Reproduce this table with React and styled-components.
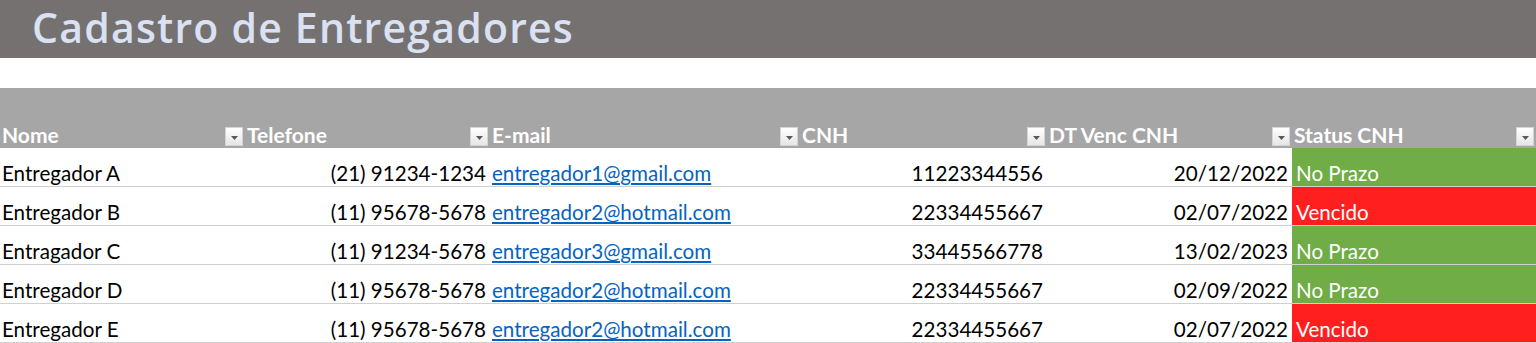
import React from 'react';
import styled, { createGlobalStyle } from 'styled-components';

const GlobalStyle = createGlobalStyle`
  body {
    margin: 0;
    background: #ffffff;
    font-family: Lato, "Open Sans", sans-serif;
  }
`;

const columns = [
  { key: 'nome', label: 'Nome', align: 'left' },
  { key: 'tel', label: 'Telefone', align: 'right' },
  { key: 'email', label: 'E-mail', align: 'left' },
  { key: 'cnh', label: 'CNH', align: 'right' },
  { key: 'venc', label: 'DT Venc CNH', align: 'right' },
  { key: 'status', label: 'Status CNH', align: 'left' },
];

const rows = [
  { nome: 'Entregador A', tel: '(21) 91234-1234', email: 'entregador1@gmail.com', cnh: '11223344556', venc: '20/12/2022', status: 'No Prazo' },
  { nome: 'Entregador B', tel: '(11) 95678-5678', email: 'entregador2@hotmail.com', cnh: '22334455667', venc: '02/07/2022', status: 'Vencido' },
  { nome: 'Entragador C', tel: '(11) 91234-5678', email: 'entregador3@gmail.com', cnh: '33445566778', venc: '13/02/2023', status: 'No Prazo' },
  { nome: 'Entregador D', tel: '(11) 95678-5678', email: 'entregador2@hotmail.com', cnh: '22334455667', venc: '02/09/2022', status: 'No Prazo' },
  { nome: 'Entregador E', tel: '(11) 95678-5678', email: 'entregador2@hotmail.com', cnh: '22334455667', venc: '02/07/2022', status: 'Vencido' },
];

export default function App() {
  return (
    <>
      <GlobalStyle />
      <Page>
        <TitleBar>
          <Title>Cadastro de Entregadores</Title>
        </TitleBar>
        <Spacer />
        <Table>
          {columns.map((c) => (
            <HeadCell key={c.key}>
              <HeadLabel>{c.label}</HeadLabel>
              <FilterButton>
                <svg width="7" height="4" viewBox="0 0 7 4">
                  <path d="M0 0h7L3.5 4z" fill="#595959" />
                </svg>
              </FilterButton>
            </HeadCell>
          ))}
          {rows.map((r, i) =>
            columns.map((c) => {
              if (c.key === 'email') {
                return (
                  <Cell key={i + c.key} align="left">
                    <MailLink href="#">{r.email}</MailLink>
                  </Cell>
                );
              }
              if (c.key === 'status') {
                return (
                  <StatusCell key={i + c.key} expired={r.status === 'Vencido'}>
                    {r.status}
                  </StatusCell>
                );
              }
              return (
                <Cell key={i + c.key} align={c.align}>
                  {r[c.key]}
                </Cell>
              );
            })
          )}
        </Table>
      </Page>
    </>
  );
}

const Page = styled.div`
  width: 1536px;
  height: 343px;
  overflow: hidden;
`;

const TitleBar = styled.header`
  height: 58px;
  box-sizing: border-box;
  background: #767171;
  display: flex;
  align-items: center;
  padding: 0 0 5px 32px;
`;

const Title = styled.h1`
  margin: 0;
  font-family: "Open Sans", sans-serif;
  font-weight: 600;
  font-size: 41px;
  line-height: 50px;
  letter-spacing: 1.2px;
  color: #d9e1f2;
`;

const Spacer = styled.div`
  height: 30px;
`;

const Table = styled.div`
  display: grid;
  grid-template-columns: 245px 245px 310px 247px 245px 244px;
  grid-template-rows: 60px repeat(5, 39px);
  font-family: Lato, "Open Sans", sans-serif;
  font-size: 20.6px;
  color: #000;
`;

const HeadCell = styled.div`
  background: #a6a6a6;
  display: flex;
  align-items: flex-end;
  justify-content: space-between;
  padding: 0 2px 2px 2px;
`;

const HeadLabel = styled.span`
  color: #ffffff;
  font-weight: 700;
  font-size: 21px;
  line-height: 24px;
  margin-bottom: -1px;
`;

const FilterButton = styled.span`
  width: 18px;
  height: 19px;
  box-sizing: border-box;
  display: flex;
  align-items: center;
  justify-content: center;
  padding-top: 3px;
  background: linear-gradient(#ffffff, #e6e6e6);
  border: 1px solid #d4d4d4;
`;

const Cell = styled.div`
  display: flex;
  align-items: flex-end;
  justify-content: ${(p) => (p.align === 'right' ? 'flex-end' : 'flex-start')};
  padding: 0 4px 0 2px;
  line-height: 26px;
  border-bottom: 1px solid #d0d0d0;
  white-space: nowrap;
`;

const StatusCell = styled(Cell)`
  background: ${(p) => (p.expired ? '#ff1f1f' : '#70ad47')};
  color: #ffffff;
  padding-left: 4px;
`;

const MailLink = styled.a`
  color: #0563c1;
  text-decoration: underline;
  text-underline-offset: 2px;
`;
